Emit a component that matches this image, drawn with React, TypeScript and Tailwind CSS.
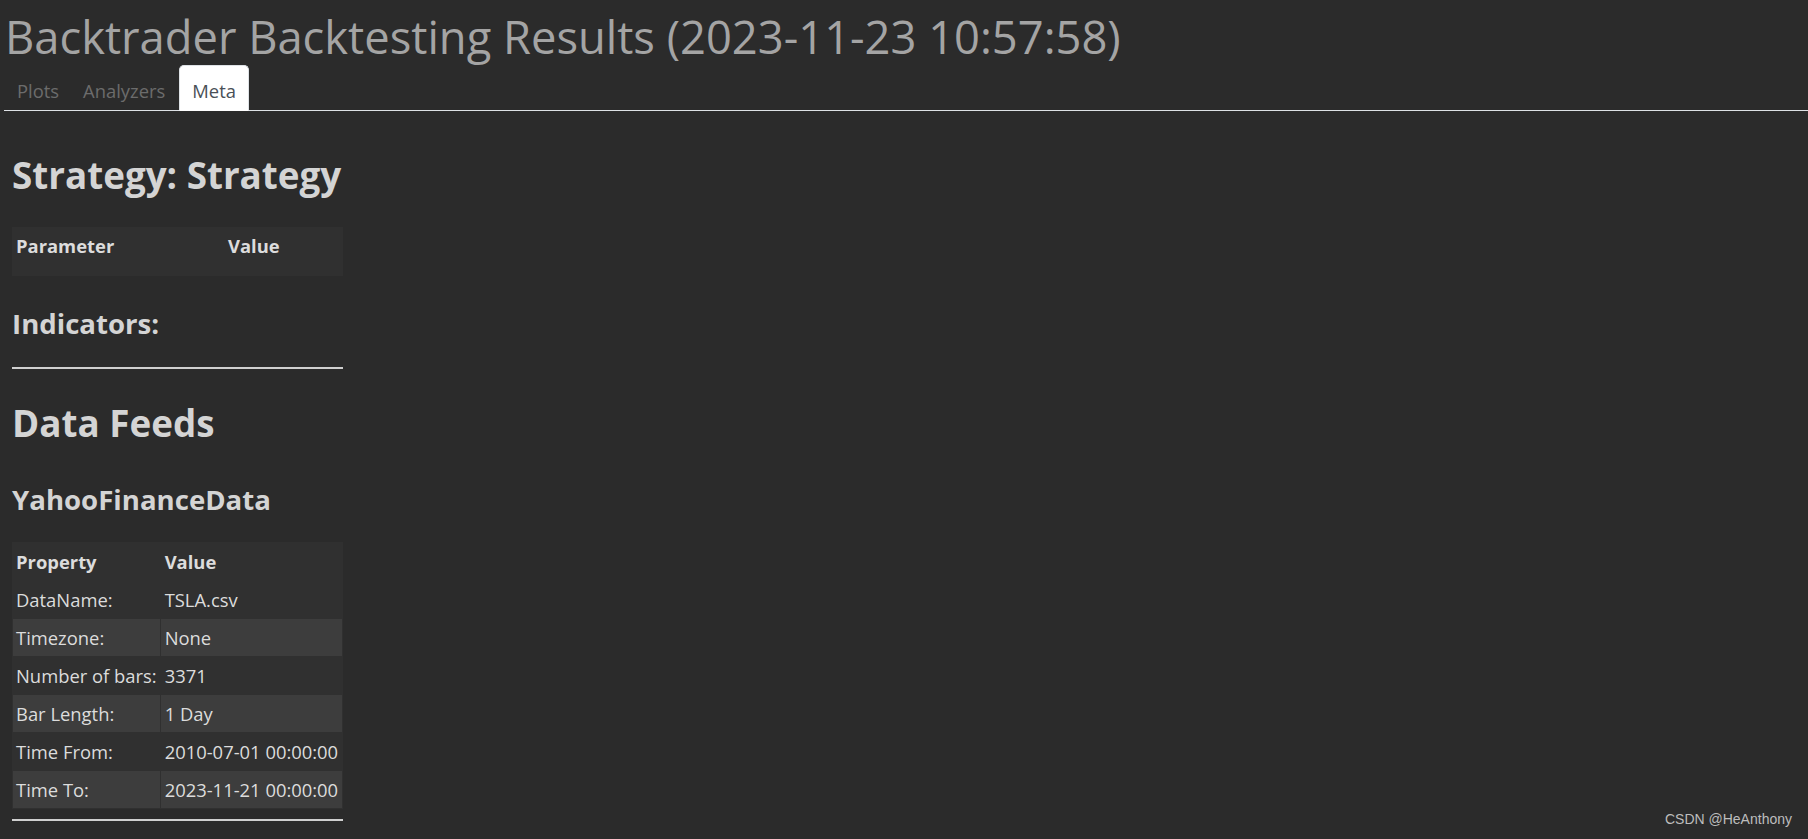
const font = { fontFamily: '"Open Sans", "Noto Sans", sans-serif' };

const feed: [string, string][] = [
  ["DataName:", "TSLA.csv"],
  ["Timezone:", "None"],
  ["Number of bars:", "3371"],
  ["Bar Length:", "1 Day"],
  ["Time From:", "2010-07-01 00:00:00"],
  ["Time To:", "2023-11-21 00:00:00"],
];

function Tabs() {
  return (
    <div className="flex items-end border-b border-[#dee2e6] ml-[4px] h-[44px]">
      <div className="px-3 pt-[11px] pb-[5px] text-[18.4px] leading-[27.6px] text-[#6c6c6c] ml-[1px]">Plots</div>
      <div className="px-3 pt-[11px] pb-[5px] text-[18.4px] leading-[27.6px] text-[#6c6c6c]">Analyzers</div>
      <div className="px-3 pt-[11px] pb-[5px] text-[18.4px] leading-[27.6px] text-[#495057] bg-white rounded-t-[5px] border border-[#dee2e6] border-b-white -mb-px ml-[2px]">
        Meta
      </div>
    </div>
  );
}

export default function App() {
  return (
    <div className="relative min-h-screen bg-[#2b2b2b] overflow-hidden" style={font}>
      <h1 className="h-[67px] pl-[5px] pt-[9px] text-[45.3px] leading-[55px] text-[#a4a4a4] whitespace-nowrap">
        Backtrader Backtesting Results (2023-11-23 10:57:58)
      </h1>
      <Tabs />

      <div className="w-[331px] ml-[12px] text-[#dcdcdc]">
        <h2 className="mt-[42px] text-[36.8px] leading-[44px] font-bold text-[#d4d4d4] whitespace-nowrap">Strategy: Strategy</h2>

        <table className="mt-[30px] w-full bg-[#303030] text-[18.4px]">
          <thead>
            <tr className="h-[38px]">
              <th className="w-[212px] px-[4px] text-left font-bold">Parameter</th>
              <th className="px-[4px] text-left font-bold">Value</th>
            </tr>
          </thead>
          <tbody>
            <tr className="h-[11px]">
              <td></td>
              <td></td>
            </tr>
          </tbody>
        </table>

        <h4 className="mt-[31px] text-[27.6px] leading-[33px] font-bold text-[#d4d4d4]">Indicators:</h4>
        <hr className="mt-[27px] border-0 border-t-2 border-[#d0d0d0]" />

        <h2 className="mt-[32px] text-[36.8px] leading-[44px] font-bold text-[#d4d4d4]">Data Feeds</h2>
        <h4 className="mt-[38px] text-[27.6px] leading-[33px] font-bold text-[#d4d4d4]">YahooFinanceData</h4>

        <table className="mt-[26px] w-full bg-[#303030] border-separate border-spacing-[1px] text-[18.4px] leading-[27.6px]">
          <thead>
            <tr className="h-[37px]">
              <th className="w-[145px] px-[3px] text-left font-bold">Property</th>
              <th className="px-[4px] text-left font-bold">Value</th>
            </tr>
          </thead>
          <tbody>
            {feed.map(([k, v], i) => (
              <tr key={k} className="h-[37px]">
                <td className={"px-[3px] whitespace-nowrap " + (i % 2 === 1 ? "bg-[#3d3d3d]" : "")}>{k}</td>
                <td className={"px-[4px] whitespace-nowrap " + (i % 2 === 1 ? "bg-[#3d3d3d]" : "")}>{v}</td>
              </tr>
            ))}
          </tbody>
        </table>
        <hr className="mt-[10px] border-0 border-t-2 border-[#d0d0d0]" />
      </div>

      <div
        className="absolute right-[16px] bottom-[9px] text-[14px] text-[#bdbdbd]"
        style={{ fontFamily: '"Liberation Sans", Arial, sans-serif' }}
      >
        CSDN @HeAnthony
      </div>
    </div>
  );
}
